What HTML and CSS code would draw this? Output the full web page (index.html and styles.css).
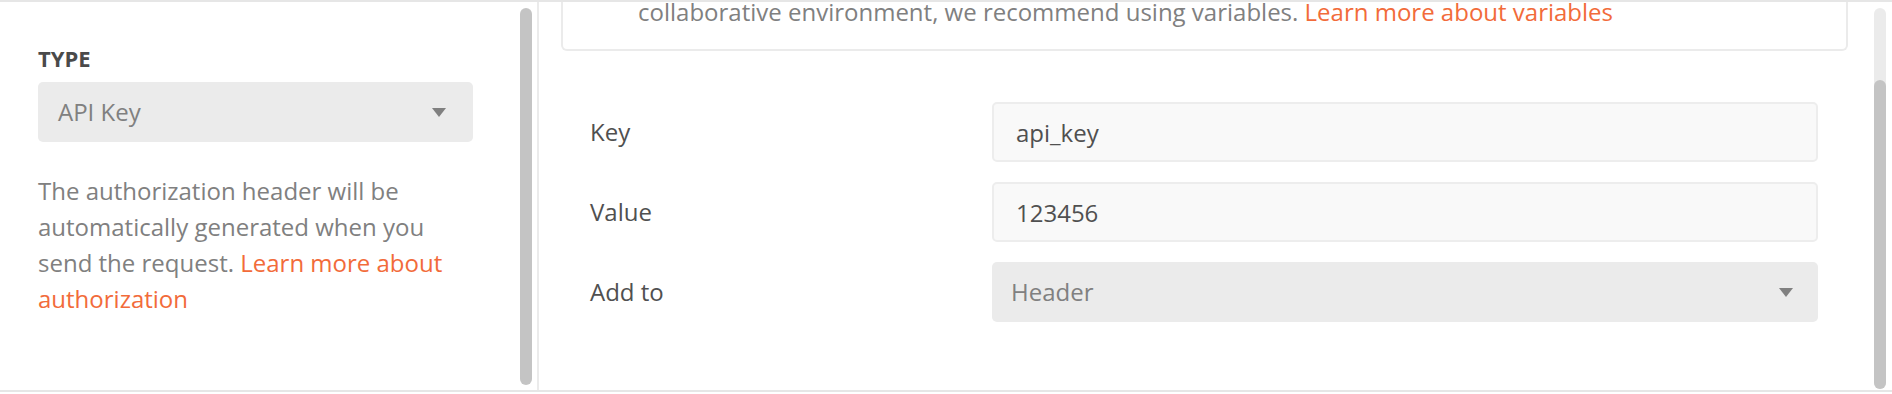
FILE: index.html
```html
<!DOCTYPE html>
<html lang="en">
<head>
<meta charset="utf-8">
<title>Authorization</title>
<link rel="stylesheet" href="styles.css">
</head>
<body>
<div class="frame">
  <aside class="left-pane">
    <div class="left-content">
      <div class="type-label">TYPE</div>
      <div class="select select-type">
        <span class="select-value">API Key</span>
        <svg class="caret" width="14" height="9" viewBox="0 0 14 9"><path d="M0 0H14L7 9Z" fill="#808080"/></svg>
      </div>
      <p class="help">The authorization header will be automatically generated when you send the request. <a class="link" href="#">Learn more about authorization</a></p>
    </div>
    <div class="scroll-thumb left-thumb"></div>
  </aside>
  <main class="right-pane">
    <div class="right-content">
      <div class="notice">
        <p class="notice-text">collaborative environment, we recommend using variables. <a class="link" href="#">Learn more about variables</a></p>
      </div>
      <div class="form">
        <label class="form-label">Key</label>
        <div class="input">api_key</div>
        <label class="form-label">Value</label>
        <div class="input">123456</div>
        <label class="form-label">Add to</label>
        <div class="select select-addto">
          <span class="select-value">Header</span>
          <svg class="caret" width="14" height="9" viewBox="0 0 14 9"><path d="M0 0H14L7 9Z" fill="#808080"/></svg>
        </div>
      </div>
    </div>
    <div class="scroll-track">
      <div class="scroll-thumb right-thumb"></div>
    </div>
  </main>
</div>
</body>
</html>
```
FILE: styles.css
```css
* { box-sizing: border-box; }

html, body {
  margin: 0;
  padding: 0;
  background: #ffffff;
}

body {
  width: 1892px;
  height: 394px;
  font-family: "Open Sans", "Noto Sans", "Liberation Sans", sans-serif;
  font-size: 24px;
  color: #505050;
  overflow: hidden;
}

.frame {
  display: flex;
  height: 392px;
  border-top: 2px solid #e6e6e6;
  border-bottom: 2px solid #e6e6e6;
}

.left-pane {
  display: flex;
  width: 539px;
  flex: none;
  border-right: 2px solid #ebebeb;
  padding-left: 38px;
}

.left-content {
  width: 435px;
  padding-top: 41px;
}

.type-label {
  font-size: 22px;
  font-weight: 700;
  line-height: 30px;
  color: #4a4a4a;
  margin-bottom: 9px;
}

.select {
  display: flex;
  align-items: center;
  justify-content: space-between;
  height: 60px;
  background: #ebebeb;
  border-radius: 5px;
  color: #808080;
}

.select-type {
  padding: 0 27px 0 20px;
}

.select-addto {
  padding: 0 25px 0 19px;
}

.select-value {
  line-height: 30px;
}

.caret { display: block; }

.help {
  margin: 31px 0 0;
  line-height: 36px;
  color: #808080;
}

.link {
  color: #f26b3a;
  text-decoration: none;
}

.scroll-thumb {
  width: 12px;
  background: #c4c4c4;
  border-radius: 6px;
}

.left-thumb {
  margin: 6px 5px 5px auto;
}

.right-pane {
  flex: 1;
  display: flex;
  overflow: hidden;
}

.right-content {
  flex: 1;
  padding: 0 26px 0 22px;
}

.notice {
  border: 2px solid #ebebeb;
  border-top: none;
  border-radius: 0 0 6px 6px;
  padding: 0 20px 27px 75px;
}

.notice-text {
  margin: 0;
  line-height: 20px;
  color: #808080;
  white-space: nowrap;
}

.form {
  display: grid;
  grid-template-columns: 402px 826px;
  grid-auto-rows: 60px;
  row-gap: 20px;
  align-items: center;
  margin: 51px 0 0 29px;
}

.form-label {
  color: #505050;
  line-height: 30px;
}

.input {
  height: 60px;
  display: flex;
  align-items: center;
  padding-left: 22px;
  background: #f9f9f9;
  border: 2px solid #ededed;
  border-radius: 5px;
  color: #505050;
}

.scroll-track {
  width: 12px;
  flex: none;
  margin: 6px 6px 1px 0;
  background: #ebebeb;
  border-radius: 6px;
  display: flex;
  flex-direction: column;
  justify-content: flex-end;
}

.right-thumb {
  height: 309px;
}
```
